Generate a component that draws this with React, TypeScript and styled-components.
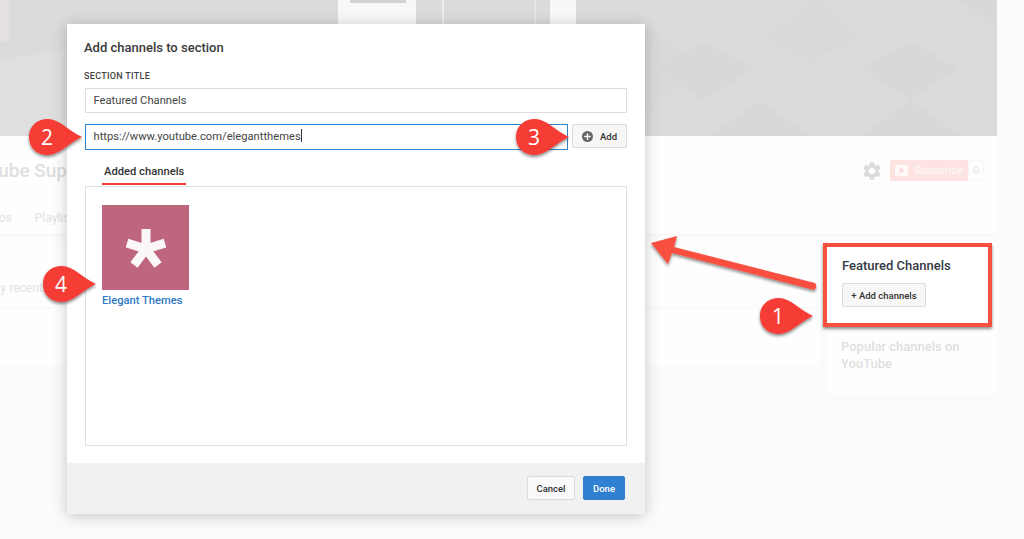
import React from "react";
import styled, { createGlobalStyle } from "styled-components";
import { MdSettings, MdPlayArrow } from "react-icons/md";
import { Plus } from "lucide-react";

const RED = "#f9503f";
const MARKER = "#f63c36";

const Global = createGlobalStyle`
  html, body { margin: 0; padding: 0; background: #fbfbfb; }
  body { font-family: Roboto, "Liberation Sans", sans-serif; overflow: hidden; }
`;

const Page = styled.div`
  position: relative;
  width: 1024px;
  height: 539px;
  overflow: hidden;
`;

const Channel = styled.div`
  width: 997px;
`;

const BannerArt = styled.svg`
  display: block;
  width: 997px;
  height: 136px;
`;

const ChannelHead = styled.div`
  height: 99px;
  background: #fefefe;
  border-bottom: 1px solid #f6f6f6;
  box-sizing: border-box;
  padding: 0 13px 0 0;
`;

const HeadRow = styled.div`
  display: flex;
  align-items: center;
  justify-content: space-between;
  height: 42px;
  padding-top: 13px;
`;

const ChannelName = styled.div`
  margin-left: -45px;
  font-size: 19px;
  font-weight: 500;
  color: #dedede;
  white-space: nowrap;
`;

const SubscribeGroup = styled.div`
  display: flex;
  align-items: center;
  padding-top: 1px;
`;

const Gear = styled(MdSettings)`
  color: #dcdcdc;
  margin-right: 7px;
`;

const SubscribeButton = styled.div`
  display: flex;
  align-items: center;
  gap: 6px;
  width: 78px;
  height: 21px;
  padding-left: 5px;
  box-sizing: border-box;
  background: #fde3e1;
  color: #fdf6f5;
  font-size: 11px;
  font-weight: 500;
  border-radius: 1px 0 0 1px;
`;

const PlayBadge = styled.span`
  display: inline-flex;
  align-items: center;
  justify-content: center;
  width: 13px;
  height: 11px;
  background: #fff9f8;
  border-radius: 2px;
  color: #fcd9d6;
`;

const SubCount = styled.div`
  width: 16px;
  height: 21px;
  line-height: 19px;
  text-align: center;
  font-size: 11px;
  color: #e4e4e4;
  background: #fefefe;
  border: 1px solid #f6f6f6;
  box-sizing: border-box;
`;

const Tabs = styled.div`
  display: flex;
  gap: 23px;
  margin-top: 20px;
  margin-left: -25px;
  font-size: 12px;
  color: #e2e2e2;
`;

const ContentRow = styled.div`
  display: flex;
  gap: 8px;
  margin-top: 6px;
  align-items: flex-start;
`;

const MainCard = styled.div`
  width: 820px;
  height: 125px;
  background: #fefefe;
`;

const CardLine = styled.div`
  height: 26px;
  padding-top: 40px;
  font-size: 12px;
  color: #e2e2e2;
  white-space: nowrap;
  margin-left: -10px;
  border-bottom: 1px solid #f7f7f7;
`;

const SideCard = styled.div`
  width: 169px;
  height: 154px;
  background: #fefefe;
  box-sizing: border-box;
  padding: 97px 12px 0 13px;
`;

const Popular = styled.div`
  font-size: 13px;
  font-weight: 500;
  line-height: 17px;
  color: #dfdfdf;
`;

const Modal = styled.div`
  position: absolute;
  left: 67px;
  top: 24px;
  width: 578px;
  height: 490px;
  background: #fff;
  box-shadow: 0 2px 14px rgba(0, 0, 0, 0.22);
  display: flex;
  flex-direction: column;
`;

const ModalBody = styled.div`
  flex: 1;
  padding: 17px 18px;
  display: flex;
  flex-direction: column;
`;

const ModalTitle = styled.div`
  font-size: 13px;
  font-weight: 500;
  line-height: 13px;
  color: #3a3a3a;
  margin-left: -1px;
`;

const FieldLabel = styled.div`
  margin-top: 17px;
  font-size: 9px;
  font-weight: 500;
  line-height: 10px;
  letter-spacing: 0.3px;
  color: #444;
  margin-left: -1px;
`;

const TextField = styled.div<{ $focused?: boolean }>`
  height: 26px;
  box-sizing: border-box;
  border: 1px solid ${(p) => (p.$focused ? "#2f84d2" : "#dedede")};
  padding: 0 7.5px;
  font-size: 11.2px;
  line-height: 24px;
  color: #444;
  background: #fff;
`;

const TitleField = styled(TextField)`
  margin-top: 7px;
  width: 542px;
  height: 25px;
  line-height: 23px;
`;

const UrlRow = styled.div`
  display: flex;
  align-items: flex-start;
  gap: 4px;
  margin-top: 11px;
`;

const UrlField = styled(TextField)`
  width: 483px;
`;

const Caret = styled.span`
  display: inline-block;
  width: 1px;
  height: 13px;
  background: #333;
  vertical-align: -2px;
`;

const GrayButton = styled.div`
  display: flex;
  align-items: center;
  justify-content: center;
  box-sizing: border-box;
  height: 24px;
  background: #f7f7f7;
  border: 1px solid #dcdcdc;
  border-radius: 2px;
  font-size: 9.5px;
  font-weight: 500;
  color: #333;
`;

const AddButton = styled(GrayButton)`
  width: 55px;
  gap: 7px;
`;

const PlusDot = styled.span`
  display: inline-flex;
  align-items: center;
  justify-content: center;
  width: 11px;
  height: 11px;
  border-radius: 50%;
  background: #666;
  color: #f7f7f7;
`;

const SectionTab = styled.div`
  align-self: flex-start;
  margin: 15px 0 0 17px;
  padding: 0 2px 5px;
  font-size: 11.2px;
  font-weight: 500;
  line-height: 13px;
  color: #333;
  border-bottom: 2px solid #f23b35;
`;

const ChannelBox = styled.div`
  width: 542px;
  height: 260px;
  margin-top: 1px;
  box-sizing: border-box;
  border: 1px solid #e0e0e0;
  padding: 18px 16px;
`;

const Thumb = styled.div`
  width: 87px;
  height: 85px;
  background: #bf667f;
  display: flex;
  align-items: center;
  justify-content: center;
`;

const ChannelLink = styled.div`
  margin-top: 4px;
  font-size: 11.2px;
  font-weight: 500;
  line-height: 14px;
  color: #2f78c4;
`;

const ModalFooter = styled.div`
  height: 51px;
  background: #f1f1f1;
  display: flex;
  justify-content: flex-end;
  gap: 8px;
  padding: 13px 20px 0 0;
  box-sizing: border-box;
`;

const CancelButton = styled(GrayButton)`
  width: 48px;
  background: #f9f9f9;
`;

const DoneButton = styled(GrayButton)`
  width: 42px;
  background: #2f80d0;
  border-color: #2f80d0;
  color: #fff;
`;

const Callout = styled.div`
  position: absolute;
  left: 823px;
  top: 243px;
  width: 169px;
  height: 84px;
  box-sizing: border-box;
  background: #fff;
  border: 4px solid ${RED};
  box-shadow: 0 2px 3px rgba(0, 0, 0, 0.45);
  padding: 12px 15px;
`;

const CalloutTitle = styled.div`
  font-size: 13px;
  font-weight: 500;
  line-height: 14px;
  color: #333a45;
`;

const AddChannels = styled(GrayButton)`
  width: 84px;
  margin-top: 10px;
`;

const Overlay = styled.svg`
  position: absolute;
  left: 0;
  top: 0;
  width: 1024px;
  height: 539px;
  pointer-events: none;
`;

const MarkerNumber = styled.text`
  font-family: "Open Sans", Roboto, sans-serif;
  font-size: 21px;
  font-weight: 500;
  fill: #fff;
  text-anchor: middle;
`;

function Marker({ x, y, n }: { x: number; y: number; n: string }) {
  return (
    <g transform={`translate(${x} ${y})`}>
      <path
        d="M-18 0C-18 -11 -10 -18 1 -18C12 -18 22 -6 35 0C22 6 12 18 1 18C-10 18 -18 11 -18 0Z"
        fill={MARKER}
        filter="url(#markerShadow)"
      />
      <MarkerNumber x={0} y={7.5}>
        {n}
      </MarkerNumber>
    </g>
  );
}

export default function App() {
  return (
    <Page>
      <Global />
      <Channel>
        <BannerArt viewBox="0 0 997 136">
          <rect width="997" height="136" fill="#dbdbdb" />
          <polygon points="0,136 0,60 62,50 136,24 172,90 120,136" fill="#dfdfdf" />
          <polygon points="645,24 700,70 645,115" fill="#d9d9d9" />
          <polygon points="655,68 703,42 755,68 703,100" fill="#d8d8d8" />
          <polygon points="860,68 910,42 957,68 910,100" fill="#d8d8d8" />
          <polygon points="710,136 760,100 810,136" fill="#d8d8d8" />
          <polygon points="770,38 815,0 860,38 810,60" fill="#d9d9d9" />
          <polygon points="860,136 910,100 960,136" fill="#d8d8d8" />
          <polygon points="960,0 997,0 997,30" fill="#d8d8d8" />
          <rect x="0" y="0" width="9" height="41" fill="#e3e0df" />
          <rect x="338" y="0" width="78" height="24" fill="#f8f8f8" />
          <rect x="350" y="0" width="56" height="3" fill="#d2d2d2" />
          <rect x="442" y="0" width="2" height="24" fill="#ececec" />
          <rect x="534" y="0" width="2" height="24" fill="#e6e6e6" />
          <rect x="550" y="0" width="26" height="24" fill="#f8f8f8" />
        </BannerArt>
        <ChannelHead>
          <HeadRow>
            <ChannelName>YouTube Super</ChannelName>
            <SubscribeGroup>
              <Gear size={22} />
              <SubscribeButton>
                <PlayBadge>
                  <MdPlayArrow size={11} />
                </PlayBadge>
                Subscribe
              </SubscribeButton>
              <SubCount>0</SubCount>
            </SubscribeGroup>
          </HeadRow>
          <Tabs>
            <span>Videos</span>
            <span>Playlists</span>
          </Tabs>
        </ChannelHead>
        <ContentRow>
          <MainCard>
            <CardLine>my recent</CardLine>
          </MainCard>
          <SideCard>
            <Popular>
              Popular channels on
              <br />
              YouTube
            </Popular>
          </SideCard>
        </ContentRow>
      </Channel>

      <Modal>
        <ModalBody>
          <ModalTitle>Add channels to section</ModalTitle>
          <FieldLabel>SECTION TITLE</FieldLabel>
          <TitleField>Featured Channels</TitleField>
          <UrlRow>
            <UrlField $focused>
              https://www.youtube.com/elegantthemes
              <Caret />
            </UrlField>
            <AddButton>
              <PlusDot>
                <Plus size={9} strokeWidth={4} />
              </PlusDot>
              Add
            </AddButton>
          </UrlRow>
          <SectionTab>Added channels</SectionTab>
          <ChannelBox>
            <Thumb>
              <svg width="40" height="40" viewBox="0 0 40 40">
                <path
                  d="M20 21V1M20 21L39 15M20 21L32 37M20 21L8 37M20 21L1 15"
                  stroke="#fbf6f7"
                  strokeWidth="9"
                  fill="none"
                />
              </svg>
            </Thumb>
            <ChannelLink>Elegant Themes</ChannelLink>
          </ChannelBox>
        </ModalBody>
        <ModalFooter>
          <CancelButton>Cancel</CancelButton>
          <DoneButton>Done</DoneButton>
        </ModalFooter>
      </Modal>

      <Callout>
        <CalloutTitle>Featured Channels</CalloutTitle>
        <AddChannels>+ Add channels</AddChannels>
      </Callout>

      <Overlay viewBox="0 0 1024 539">
        <defs>
          <filter id="markerShadow" x="-30%" y="-30%" width="160%" height="160%">
            <feDropShadow dx="0" dy="2" stdDeviation="1.5" floodColor="#000" floodOpacity="0.45" />
          </filter>
        </defs>
        <path
          d="M651 243L677 236L674 247L815 283Q818 287 814 290L672 253L668 264Z"
          fill={RED}
          filter="url(#markerShadow)"
        />
        <Marker x={778} y={316} n="1" />
        <Marker x={47} y={137} n="2" />
        <Marker x={534} y={137} n="3" />
        <Marker x={61} y={284} n="4" />
      </Overlay>
    </Page>
  );
}
